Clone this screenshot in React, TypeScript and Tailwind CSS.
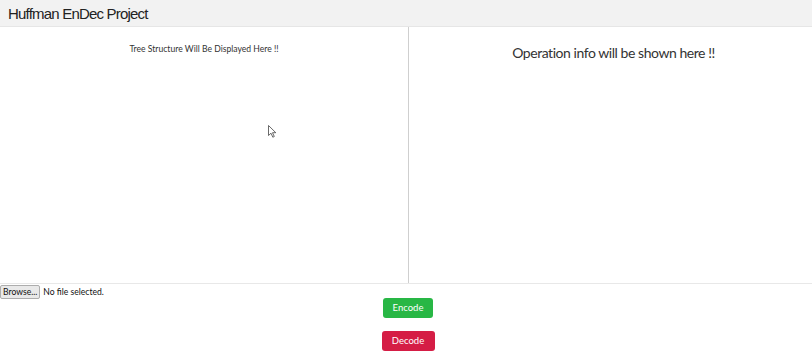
import React from "react";

export default function App() {
  return (
    <div className="w-[812px] h-[360px] bg-white relative overflow-hidden" style={{ fontFamily: 'Lato, "Open Sans", sans-serif' }}>
      <div className="h-[27px] bg-[#f2f2f2] flex items-center pl-[8px] border-b border-[#e6e6e6]">
        <span className="text-[15px] text-[#222] leading-none tracking-[-0.8px]" style={{ fontFamily: '"Liberation Sans", Arial, sans-serif' }}>Huffman EnDec Project</span>
      </div>
      <div className="flex h-[257px] border-b border-[#e8e8e8]">
        <div className="w-[409px] border-r border-[#cfcfcf] flex justify-center pt-[18px]">
          <span className="text-[8.6px] text-[#333] leading-none">Tree Structure Will Be Displayed Here !!</span>
        </div>
        <div className="flex-1 flex justify-center pt-[19px] pl-[6px]">
          <span className="text-[14px] text-[#333] leading-none tracking-[-0.45px]">Operation info will be shown here !!</span>
        </div>
      </div>
      <div className="flex items-center h-[14px] mt-[1px]">
        <span className="h-[14px] px-[2px] flex items-center bg-[#e9e9e9] border border-[#adadad] rounded-[2px] text-[8.6px] text-[#111] leading-none">Browse...</span>
        <span className="ml-[3px] text-[8.6px] text-[#111] leading-none">No file selected.</span>
      </div>
      <div className="flex flex-col items-center">
        <button className="mt-[-1px] w-[50px] h-[20px] rounded-[3px] bg-[#28b745] text-white text-[9.5px] leading-none ml-[4px]">Encode</button>
        <button className="mt-[13px] w-[53px] h-[20px] rounded-[3px] bg-[#d51d45] text-white text-[9.5px] leading-none ml-[4px]">Decode</button>
      </div>
      <svg className="absolute left-[268px] top-[125px]" width="9" height="13" viewBox="0 0 9 13">
        <path d="M0.5 0.5 L0.5 10.5 L3 8.2 L4.8 12.2 L6.3 11.5 L4.5 7.7 L7.8 7.7 Z" fill="white" stroke="#444" strokeWidth="0.8" />
      </svg>
    </div>
  );
}
